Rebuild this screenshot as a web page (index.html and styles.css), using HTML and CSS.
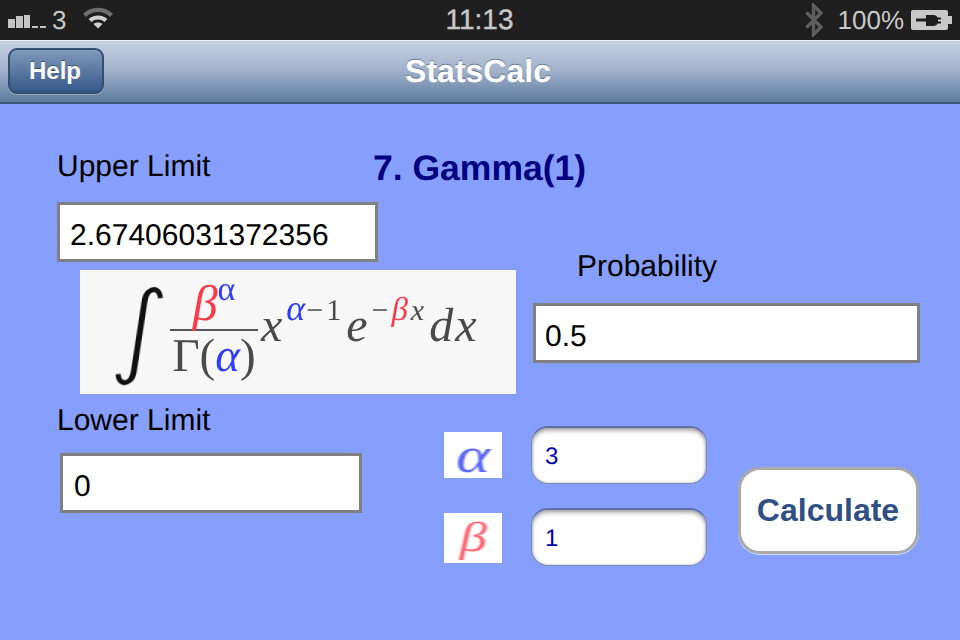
FILE: index.html
```html
<!DOCTYPE html>
<html lang="en">
<head>
<meta charset="utf-8">
<title>StatsCalc</title>
<link rel="stylesheet" href="styles.css">
</head>
<body>
<div class="screen">
  <header class="status">
    <div class="status-left">
      <svg class="signal" width="38" height="13" viewBox="0 0 38 13"><g fill="#c4c4c4"><rect x="0" y="4" width="7" height="9"/><rect x="8" y="1" width="7" height="12"/><rect x="16" y="0" width="6" height="13"/><rect x="24" y="11" width="6" height="2"/><rect x="32" y="11" width="6" height="2"/></g></svg>
      <span class="carrier">3</span>
      <svg class="wifi" width="32" height="24" viewBox="0 0 32 24"><g fill="none" stroke="#6e6e6e" stroke-width="4.2"><path d="M2.500 9.500C10 2 22 2 29.500 9.500"/><path d="M8 14.500C12.500 10.500 19.500 10.500 24 14.500" stroke="#d0d0d0"/></g><path d="M16 22.500L11.500 18C14 16 18 16 20.500 18Z" fill="#d0d0d0"/></svg>
    </div>
    <div class="clock">11:13</div>
    <div class="status-right">
      <svg class="bt" width="20" height="34" viewBox="0 0 20 34"><path d="M2.500 9.500L17 24 9.500 31.500V2.500L17 10 2.500 24.500" fill="none" stroke="#5e5e5e" stroke-width="3.400"/></svg>
      <span class="pct">100%</span>
      <svg class="batt" width="42" height="20" viewBox="0 0 42 20"><rect x="0" y="0" width="37" height="20" rx="2" fill="#c8c8c8"/><rect x="37" y="6" width="4" height="8" fill="#c8c8c8"/><path d="M5 8.500H15V5H22.500C24.500 5 26 6 26.500 7.500H30V9.500H27V11.500H30V13.500H26.500C26 15 24.500 16 22.500 16H15V11.500H5Z" fill="#1f1f1f"/></svg>
    </div>
  </header>

  <nav class="navbar">
    <div class="nav-side"><button class="help" type="button">Help</button></div>
    <h1 class="nav-title">StatsCalc</h1>
    <div class="nav-side"></div>
  </nav>

  <main class="content">
    <section class="upper">
      <div class="upper-left">
        <div class="heading-row">
          <span class="label">Upper Limit</span>
          <h2 class="dist-title">7. Gamma(1)</h2>
        </div>
        <div class="box box-upper">2.67406031372356</div>
        <div class="formula">
          <span class="integral">∫</span>
          <span class="frac">
            <span class="num"><i class="red">β</i><sup class="blue">α</sup></span>
            <span class="den">Γ(<i class="blue">α</i>)</span>
          </span>
          <span class="expr"><i>x</i><sup><i class="blue">α</i>−1</sup><i class="e">e</i><sup>−<i class="red">β</i><i>x</i></sup><i class="dx">dx</i></span>
        </div>
      </div>
      <div class="upper-right">
        <span class="label label-prob">Probability</span>
        <div class="box box-prob">0.5</div>
      </div>
    </section>

    <section class="lower">
      <div class="lower-left">
        <span class="label">Lower Limit</span>
        <div class="box box-lower">0</div>
      </div>
      <div class="params">
        <div class="param-symbols">
          <div class="symbol symbol-a"><span class="glyph blue">α</span></div>
          <div class="symbol symbol-b"><span class="glyph red">β</span></div>
        </div>
        <div class="param-fields">
          <div class="field">3</div>
          <div class="field">1</div>
        </div>
        <button class="calc" type="button">Calculate</button>
      </div>
    </section>
  </main>
</div>
</body>
</html>
```
FILE: styles.css
```css
* { box-sizing: border-box; }
html, body { margin: 0; padding: 0; }
body { width: 960px; height: 640px; overflow: hidden; font-family: "Liberation Sans", Arial, sans-serif; text-rendering: geometricPrecision; }
.screen { width: 960px; height: 640px; display: flex; flex-direction: column; background: #869ffd; }

.status { height: 40px; flex: none; background: #1f1f1f; color: #c8c8c8; display: grid; grid-template-columns: 1fr auto 1fr; align-items: center; padding: 0 8px; }
.status-left { display: flex; align-items: center; }
.signal { margin-right: 6px; margin-top: 3px; }
.carrier { font-size: 26px; line-height: 40px; }
.wifi { margin-left: 16px; margin-top: -4px; }
.clock { font-size: 28px; line-height: 40px; -webkit-text-stroke: 0.4px #c8c8c8; margin-left: -1px; }
.status-right { display: flex; align-items: center; justify-content: flex-end; }
.bt { margin-right: 14px; }
.pct { font-size: 26px; line-height: 40px; margin-right: 7px; }
.batt { margin-right: -1px; }

.navbar { height: 64px; flex: none; border-top: 1px solid #f0f3f8; border-bottom: 2px solid #3e5878; background: linear-gradient(#c5d1e2, #9fb0c9 50%, #5d7a9f); display: grid; grid-template-columns: 1fr auto 1fr; align-items: center; padding: 0 8px; }
.help { display: block; width: 96px; height: 46px; margin-top: -1px; padding: 0 2px 0 0; border: 2px solid #34506f; border-radius: 9px; background: linear-gradient(#7f99ba, #36588a); box-shadow: 0 1px 0 rgba(255,255,255,.3); color: #fff; font: bold 24px "Liberation Sans", Arial, sans-serif; text-shadow: 0 -1px 0 rgba(0,0,0,.4); }
.nav-title { margin: 0 0 0 -4px; font-size: 32px; font-weight: bold; color: #fff; text-shadow: 0 -1px 0 rgba(50,70,100,.6); }

.content { flex: 1; display: flex; flex-direction: column; padding: 46px 40px 0 57px; }
.label { font-size: 30px; line-height: 36px; margin-bottom: -2px; color: #000; }
.box { background: #fff; border: 3px solid #808080; color: #000; font-size: 30px; line-height: 34px; padding: 14px 10px 0; height: 60px; }

.upper { display: flex; }
.upper-left { width: 476px; display: flex; flex-direction: column; flex: none; }
.heading-row { display: flex; height: 52px; }
.heading-row .label { flex: none; width: 316px; margin-top: -1px; }
.dist-title { margin: -2px 0 0; flex: none; font-size: 35.500px; line-height: 40px; font-weight: bold; color: #000080; white-space: nowrap; }
.box-upper { width: 321px; }
.formula { margin: 8px 0 0 23px; width: 436px; height: 124px; background: #f7f7f7; color: #4a4a4a; display: flex; align-items: flex-start; font-family: "Liberation Serif", "Times New Roman", serif; }
.formula > span { filter: blur(0.7px); }
.integral { flex: none; width: 90px; font-family: "DejaVu Sans", sans-serif; font-size: 104px; line-height: 116px; color: #111; text-align: center; -webkit-text-stroke: 2.500px #f7f7f7; transform: translateX(15px) skewX(-6deg); }
.frac { display: flex; flex: none; flex-direction: column; align-items: center; width: 88px; margin-top: 6px; }
.num { height: 55px; border-bottom: 2px solid #555; width: 100%; text-align: center; font-size: 50px; line-height: 54px; }
.num sup { font-size: 34px; line-height: 0; vertical-align: 20px; }
.den { font-size: 47px; line-height: 50px; white-space: nowrap; }
.expr { font-size: 48px; line-height: 50px; margin: 31px 0 0 3px; white-space: nowrap; }
.expr sup { font-size: 30px; line-height: 0; vertical-align: 21px; letter-spacing: 3px; margin-left: 4px; }
.expr sup .blue { font-size: 36px; letter-spacing: 1px; }
.expr sup .red { font-size: 33px; }
.e { margin-left: 2px; }
.dx { margin-left: 2px; letter-spacing: 2px; }
.red { color: #fa3a48; }
.blue { color: #2f3ff5; }

.upper-right { display: flex; flex-direction: column; flex: none; padding-top: 99px; }
.label-prob { margin-left: 44px; }
.box-prob { width: 387px; margin-top: 20px; padding-left: 9px; }

.lower { display: flex; margin-top: 9px; }
.lower-left { width: 387px; display: flex; flex: none; flex-direction: column; }
.box-lower { width: 302px; margin: 16px 0 0 3px; padding-left: 11px; }
.params { display: flex; margin-top: 23px; }
.param-symbols { display: flex; flex-direction: column; flex: none; width: 87px; padding-top: 6px; }
.symbol { display: flex; align-items: center; justify-content: center; width: 58px; background: #fff; font-family: "Liberation Serif", "Times New Roman", serif; font-style: italic; }
.symbol-a { height: 46px; font-size: 50px; line-height: 46px; }
.symbol-b { height: 50px; margin-top: 35px; font-size: 42px; line-height: 50px; }
.glyph { display: block; opacity: .8; filter: blur(0.7px); transform: scaleX(1.3); }
.param-fields { display: flex; flex-direction: column; flex: none; gap: 24px; width: 208px; }
.field { width: 176px; height: 58px; background: #fff; border-radius: 17px; border: 1px solid #7787bd; border-top: 2px solid #5f70a8; box-shadow: inset 0 3px 4px rgba(0,0,0,.3), inset 0 0 3px rgba(0,0,0,.25); color: #0000b0; font-size: 24px; line-height: 58px; padding-left: 13px; }
.calc { width: 181px; height: 87px; margin: 41px 0 0 -1px; padding: 0 1px 0 0; background: #fff; border: 3px solid #a9a9a9; border-radius: 22px; box-shadow: 0 1px 0 rgba(255,255,255,.6); color: #2f4f85; font: bold 32px "Liberation Sans", Arial, sans-serif; }
```
